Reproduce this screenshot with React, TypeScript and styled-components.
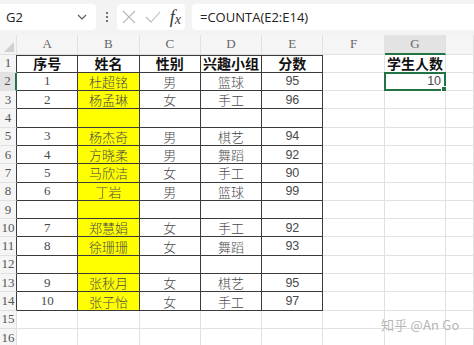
import React from 'react';
import styled, { createGlobalStyle } from 'styled-components';

const GlobalStyle = createGlobalStyle`
  body {
    margin: 0;
    background: #f3f3f3;
    overflow: hidden;
  }
`;

const COL_W = 61.3;
const ROW_H = 18.3;
const GREEN = '#217346';
const DARK = '#3a3a3a';
const LINE = '#e1e1e1';

const table: string[][] = [
  ['序号', '姓名', '性别', '兴趣小组', '分数'],
  ['1', '杜超铭', '男', '篮球', '95'],
  ['2', '杨孟琳', '女', '手工', '96'],
  [],
  ['3', '杨杰奇', '男', '棋艺', '94'],
  ['4', '方晓柔', '男', '舞蹈', '92'],
  ['5', '马欣洁', '女', '手工', '90'],
  ['6', '丁岩', '男', '篮球', '99'],
  [],
  ['7', '郑慧娟', '女', '手工', '92'],
  ['8', '徐珊珊', '女', '舞蹈', '93'],
  [],
  ['9', '张秋月', '女', '棋艺', '95'],
  ['10', '张子怡', '女', '手工', '97'],
];

const letters = ['A', 'B', 'C', 'D', 'E', 'F', 'G', ''];

const App = () => {
  const rowCount = 16;

  const renderRow = (r: number) => {
    const rowNo = r + 1;
    const data = table[r];
    const inTable = r < table.length;
    const cells: React.ReactNode[] = [];
    cells.push(
      <RowHead key="h" $selected={rowNo === 2} $darkRight={inTable}>
        {rowNo}
      </RowHead>,
    );
    for (let c = 0; c < 8; c++) {
      let text = '';
      let font: 'serif' | 'sans' | 'cjk' = 'cjk';
      let bold = false;
      let align: 'center' | 'right' = 'center';
      let bg = '#fff';
      const dark = inTable && c < 5;
      if (inTable && data && c < 5) text = data[c] || '';
      if (r === 0) bold = true;
      if (c === 0 && r > 0) font = 'serif';
      if (c === 4 && r > 0) font = 'sans';
      if (c === 1 && r > 0 && inTable) bg = '#ffff00';
      if (c === 6 && r === 0) {
        text = '学生人数';
        bold = true;
      }
      if (c === 6 && r === 1) {
        text = '10';
        font = 'sans';
        align = 'right';
      }
      cells.push(
        <Cell
          key={c}
          $bg={bg}
          $dark={dark}
          $top={dark && r === 0}
          $font={font}
          $bold={bold}
          $align={align}
        >
          {text}
          {c === 6 && r === 1 && (
            <>
              <Selection />
              <Handle />
            </>
          )}
        </Cell>,
      );
    }
    return <React.Fragment key={r}>{cells}</React.Fragment>;
  };

  return (
    <>
      <GlobalStyle />
      <Page>
        <Toolbar>
          <NameBox>
            <span>G2</span>
            <svg width="10" height="6" viewBox="0 0 10 6">
              <path d="M1 1 L5 5 L9 1" fill="none" stroke="#555" strokeWidth="1.1" />
            </svg>
          </NameBox>
          <Dots>
            <svg width="4" height="12" viewBox="0 0 4 12">
              <circle cx="2" cy="2" r="1.1" fill="#555" />
              <circle cx="2" cy="6" r="1.1" fill="#555" />
              <circle cx="2" cy="10" r="1.1" fill="#555" />
            </svg>
          </Dots>
          <FuncBox>
            <svg width="14" height="14" viewBox="0 0 14 14">
              <path d="M1 1 L13 13 M13 1 L1 13" stroke="#b8b8b8" strokeWidth="1.1" fill="none" />
            </svg>
            <svg width="16" height="12" viewBox="0 0 16 12">
              <path d="M1 6 L6 11 L15 1" stroke="#b8b8b8" strokeWidth="1.1" fill="none" />
            </svg>
            <Fx>
              f<sub>x</sub>
            </Fx>
          </FuncBox>
          <FormulaBox>=COUNTA(E2:E14)</FormulaBox>
        </Toolbar>
        <Sheet>
          <Grid>
            <Corner>
              <svg width="10" height="10" viewBox="0 0 10 10">
                <path d="M10 0 L10 10 L0 10 Z" fill="#d0d0d0" />
              </svg>
            </Corner>
            {letters.map((l, i) => (
              <ColHead key={i} $selected={l === 'G'}>
                {l}
              </ColHead>
            ))}
            {Array.from({ length: rowCount }, (_, r) => renderRow(r))}
          </Grid>
          <Watermark>知乎 @An Go</Watermark>
        </Sheet>
      </Page>
    </>
  );
};

export default App;

const Page = styled.div`
  width: 474px;
  height: 345px;
  overflow: hidden;
  background: #f3f3f3;
  font-family: 'Liberation Sans', 'Noto Sans CJK SC', sans-serif;
`;

const Toolbar = styled.div`
  height: 35px;
  display: flex;
  align-items: flex-start;
  padding-top: 4px;
  box-sizing: border-box;
`;

const Box = styled.div`
  height: 26px;
  background: #fff;
  border-radius: 4px;
  box-sizing: border-box;
  display: flex;
  align-items: center;
`;

const NameBox = styled(Box)`
  width: 100px;
  margin-left: -4px;
  padding: 0 9px 0 10px;
  justify-content: space-between;
  font-family: 'Open Sans', 'Liberation Sans', sans-serif;
  font-size: 13px;
  color: #222;
`;

const Dots = styled.div`
  width: 21px;
  height: 26px;
  display: flex;
  align-items: center;
  justify-content: center;
`;

const FuncBox = styled(Box)`
  width: 68px;
  padding: 0 4px 0 5px;
  justify-content: space-between;
`;

const Fx = styled.span`
  font-family: 'Liberation Serif', serif;
  font-style: italic;
  font-size: 18px;
  color: #333;
  line-height: 1;
  sub {
    font-size: 14px;
    vertical-align: -1px;
  }
`;

const FormulaBox = styled(Box)`
  flex: 1;
  margin-left: 7px;
  margin-right: -6px;
  padding-left: 8px;
  font-family: 'Open Sans', 'Liberation Sans', sans-serif;
  font-size: 13px;
  color: #222;
`;

const Sheet = styled.div`
  position: relative;
  background: #fff;
`;

const Grid = styled.div`
  display: grid;
  grid-template-columns: 17px repeat(7, ${COL_W}px) 1fr;
  grid-template-rows: 19.5px repeat(16, ${ROW_H}px);
`;

const Corner = styled.div`
  background: #f3f3f3;
  border-right: 1px solid ${LINE};
  border-bottom: 1px solid ${LINE};
  display: flex;
  align-items: flex-end;
  justify-content: flex-end;
  padding: 0 2px 2px 0;
  box-sizing: border-box;
`;

const ColHead = styled.div<{ $selected: boolean }>`
  background: ${(p) => (p.$selected ? '#e3e3e3' : '#f5f5f5')};
  border-right: 1px solid ${LINE};
  border-bottom: ${(p) => (p.$selected ? `2px solid ${GREEN}` : `1px solid ${LINE}`)};
  box-sizing: border-box;
  display: flex;
  align-items: center;
  justify-content: center;
  font-family: 'Liberation Serif', serif;
  font-size: 13px;
  color: #666;
`;

const RowHead = styled.div<{ $selected: boolean; $darkRight: boolean }>`
  background: ${(p) => (p.$selected ? '#e3e3e3' : '#f5f5f5')};
  border-right: ${(p) =>
    p.$selected ? `2px solid ${GREEN}` : `1px solid ${p.$darkRight ? DARK : LINE}`};
  border-bottom: 1px solid ${LINE};
  box-sizing: border-box;
  display: flex;
  align-items: center;
  justify-content: center;
  font-family: 'Liberation Serif', serif;
  font-size: 13px;
  color: #555;
  overflow: hidden;
  white-space: nowrap;
`;

const fonts = {
  serif: "'Liberation Serif', serif",
  sans: "'Liberation Sans', sans-serif",
  cjk: "'Noto Sans CJK SC', sans-serif",
};

const Cell = styled.div<{
  $bg: string;
  $dark: boolean;
  $top: boolean;
  $font: 'serif' | 'sans' | 'cjk';
  $bold: boolean;
  $align: 'center' | 'right';
}>`
  position: relative;
  background: ${(p) => p.$bg};
  border-right: 1px solid ${(p) => (p.$dark ? DARK : LINE)};
  border-bottom: 1px solid ${(p) => (p.$dark ? DARK : LINE)};
  box-shadow: ${(p) => (p.$top ? `inset 0 1px 0 ${DARK}` : 'none')};
  box-sizing: border-box;
  display: flex;
  align-items: center;
  justify-content: ${(p) => (p.$align === 'right' ? 'flex-end' : 'center')};
  padding: 0 4px;
  font-family: ${(p) => fonts[p.$font]};
  font-size: ${(p) => (p.$font === 'sans' ? '12.5px' : p.$bold ? '14px' : '13px')};
  font-weight: ${(p) => (p.$bold ? 700 : p.$font === 'cjk' ? 300 : 400)};
  color: ${(p) => (p.$bold ? '#111' : '#4a4a4a')};
  white-space: nowrap;
`;

const Selection = styled.div`
  position: absolute;
  inset: -1px -1px -1px -1px;
  border: 2px solid ${GREEN};
  pointer-events: none;
`;

const Handle = styled.div`
  position: absolute;
  right: -3px;
  bottom: -3px;
  width: 5px;
  height: 5px;
  background: ${GREEN};
  border: 1px solid #fff;
`;

const Watermark = styled.div`
  position: absolute;
  left: 381px;
  top: 280px;
  font-family: 'Noto Sans CJK SC', 'Liberation Sans', sans-serif;
  font-size: 13px;
  color: #b5b5b5;
  text-shadow: 0 0 2px #fff;
  letter-spacing: 0.2px;
`;
